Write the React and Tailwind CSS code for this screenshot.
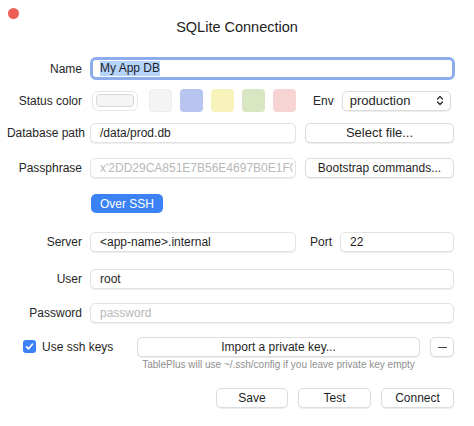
import React from "react";

const font = { fontFamily: "'Liberation Sans', Arial, sans-serif" };

function Label({ children }) {
  return (
    <div className="w-[82px] shrink-0 flex justify-end whitespace-nowrap text-[12px] leading-[16px] text-[#262626]">
      {children}
    </div>
  );
}

function Input({ value, placeholder, className = "" }) {
  return (
    <div
      className={
        "h-[20px] flex items-center rounded-[5px] border border-[#e3e3e3] bg-white shadow-[0_1px_1px_rgba(0,0,0,0.07)] pl-[9px] pr-[2px] text-[12px] overflow-hidden whitespace-nowrap " +
        className
      }
    >
      {value ? (
        <span className="text-[#1f1f1f]">{value}</span>
      ) : (
        <span className="block min-w-0 flex-1 overflow-hidden text-[#b8b8b8]">{placeholder}</span>
      )}
    </div>
  );
}

function Button({ children, className = "" }) {
  return (
    <div
      className={
        "h-[20px] flex items-center justify-center rounded-[5px] border border-[#dcdcdc] bg-white shadow-[0_1px_1px_rgba(0,0,0,0.08)] text-[#1f1f1f] whitespace-nowrap " +
        className
      }
    >
      {children}
    </div>
  );
}

export default function App() {
  return (
    <div
      className="relative w-[474px] h-[426px] bg-white overflow-hidden text-[#1f1f1f]"
      style={font}
    >
      <div className="absolute left-[8px] top-[8px] w-[11px] h-[11px] rounded-full bg-[#ed5f56]" />

      <div className="h-[57px] pt-[18px] flex justify-center text-[14.5px] leading-[18px] text-[#222]">
        SQLite Connection
      </div>

      <div className="pr-[20px]">
        {/* Name */}
        <div className="flex items-center gap-[8px]">
          <Label>Name</Label>
          <div className="flex-1 h-[23px] mr-[-1px] flex items-center rounded-[6px] border-[3px] border-[#8cadec] bg-white px-[7px] text-[12px]">
            <span className="bg-[#b5d4fc] text-[#1f1f1f] leading-[15px]">My App DB</span>
          </div>
        </div>

        {/* Status color */}
        <div className="mt-[9px] h-[23px] flex items-center gap-[8px]">
          <Label>Status color</Label>
          <div className="ml-[2px] w-[46px] h-[20px] shrink-0 rounded-[6px] border border-[#e6e6e6] bg-white flex items-center justify-center">
            <div className="w-[38px] h-[13px] rounded-[4px] border border-[#d6d6d6] bg-[#f5f5f5]" />
          </div>
          <div className="ml-[3px] flex gap-[8px]">
            <div className="w-[23px] h-[23px] rounded-[4px] bg-[#f4f4f4] border border-[#ececec]" />
            <div className="w-[23px] h-[23px] rounded-[4px] bg-[#b7c5f0]" />
            <div className="w-[23px] h-[23px] rounded-[4px] bg-[#f7f3ba]" />
            <div className="w-[23px] h-[23px] rounded-[4px] bg-[#d9e6c2]" />
            <div className="w-[23px] h-[23px] rounded-[4px] bg-[#f7d4d4]" />
          </div>
          <div className="ml-[9px] text-[12px] text-[#262626]">Env</div>
          <div className="w-[109px] h-[20px] flex items-center justify-between rounded-[5px] border border-[#dcdcdc] bg-white shadow-[0_1px_1px_rgba(0,0,0,0.08)] pl-[7px] pr-[6px] text-[13px]">
            <span>production</span>
            <svg width="8" height="11" viewBox="0 0 8 11" fill="none" stroke="#333" strokeWidth="1.4" strokeLinecap="round" strokeLinejoin="round">
              <path d="M1.5 4 L4 1.5 L6.5 4" />
              <path d="M1.5 7 L4 9.5 L6.5 7" />
            </svg>
          </div>
        </div>

        {/* Database path */}
        <div className="mt-[11px] flex items-center gap-[8px]">
          <Label>
            <span className="mr-[-3px]">Database path</span>
          </Label>
          <Input value="/data/prod.db" className="w-[206px] shrink-0" />
          <Button className="ml-[1px] flex-1 text-[13px]">Select file...</Button>
        </div>

        {/* Passphrase */}
        <div className="mt-[15px] flex items-center gap-[8px]">
          <Label>Passphrase</Label>
          <Input placeholder="x'2DD29CA851E7B56E4697B0E1F0" className="w-[206px] shrink-0" />
          <Button className="ml-[1px] flex-1 text-[12px]">Bootstrap commands...</Button>
        </div>

        {/* Over SSH */}
        <div className="mt-[16px] flex items-center gap-[8px]">
          <div className="w-[82px]" />
          <div className="ml-[1px] w-[72px] h-[19px] flex items-center justify-center rounded-[5px] bg-[#3b82f6] text-white text-[12px]">
            Over SSH
          </div>
        </div>

        {/* Server */}
        <div className="mt-[19px] flex items-center gap-[8px]">
          <Label>Server</Label>
          <Input value="<app-name>.internal" className="w-[206px] shrink-0" />
          <div className="ml-[6px] text-[12px] text-[#262626]">Port</div>
          <Input value="22" className="flex-1" />
        </div>

        {/* User */}
        <div className="mt-[17px] flex items-center gap-[8px]">
          <Label>User</Label>
          <Input value="root" className="flex-1" />
        </div>

        {/* Password */}
        <div className="mt-[14px] flex items-center gap-[8px]">
          <Label>Password</Label>
          <Input placeholder="password" className="flex-1" />
        </div>

        {/* SSH keys */}
        <div className="mt-[14px] flex items-start">
          <div className="w-[137px] shrink-0 h-[19px] flex items-center pl-[23px] gap-[6px]">
            <div className="w-[13px] h-[13px] rounded-[3px] bg-[#3b82f6] flex items-center justify-center">
              <svg width="9" height="9" viewBox="0 0 9 9" fill="none" stroke="white" strokeWidth="1.7" strokeLinecap="round" strokeLinejoin="round">
                <path d="M1.6 4.8 L3.6 6.8 L7.4 2.2" />
              </svg>
            </div>
            <span className="text-[12px] text-[#1f1f1f] whitespace-nowrap">Use ssh keys</span>
          </div>
          <div className="flex-1 min-w-0 flex flex-col">
            <Button className="h-[19px] text-[12px]">Import a private key...</Button>
            <div className="mt-[2px] text-center text-[10px] leading-[12px] text-[#8f8f8f] whitespace-nowrap">
              TablePlus will use ~/.ssh/config if you leave private key empty
            </div>
          </div>
          <Button className="ml-[10px] w-[24px] shrink-0 h-[19px]">
            <div className="w-[9px] h-[1px] bg-[#444]" />
          </Button>
        </div>

        {/* Bottom buttons */}
        <div className="mt-[17px] flex justify-end gap-[10px]">
          <Button className="w-[72px] text-[12px]">Save</Button>
          <Button className="w-[73px] text-[12px]">Test</Button>
          <Button className="w-[73px] text-[12px]">Connect</Button>
        </div>
      </div>
    </div>
  );
}
